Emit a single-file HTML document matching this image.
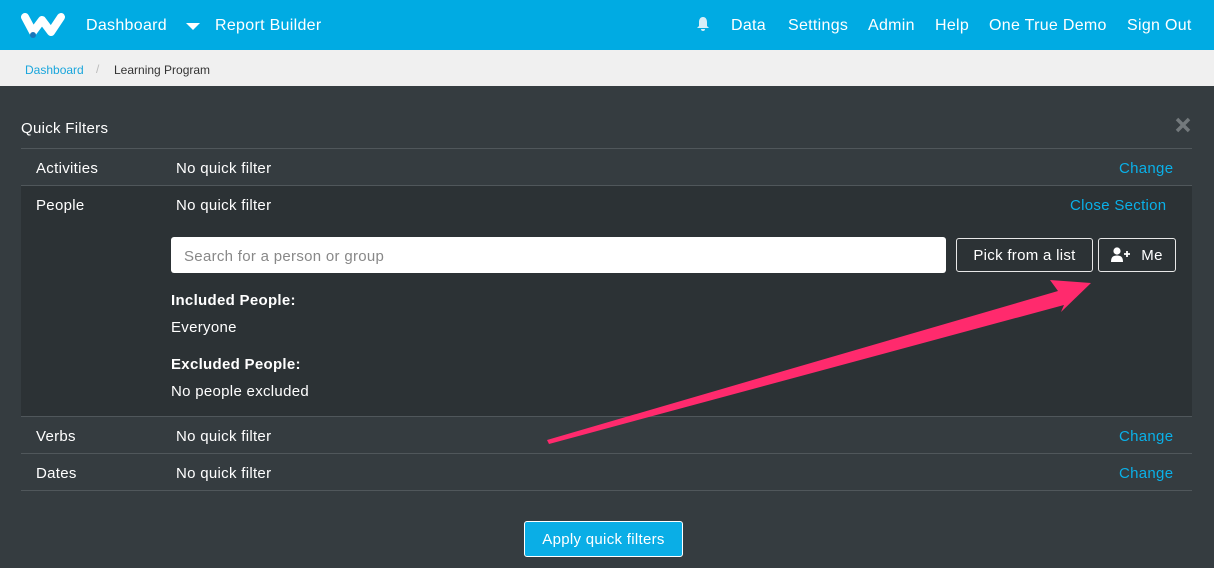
<!DOCTYPE html>
<html><head><style>
body{margin:0;width:1214px;height:568px;overflow:hidden;background:#353c40;font-family:"Liberation Sans",sans-serif;color:#fff;position:relative}
.nav{position:absolute;top:0;left:0;width:1214px;height:50px;background:#00abe3}
.nav span{position:absolute;top:17px;font-size:16px;color:#fff;letter-spacing:0.3px}
.bc{position:absolute;top:50px;left:0;width:1214px;height:36px;background:#f0f0f0;font-size:12px}
.t{position:absolute;font-size:15px;white-space:nowrap;letter-spacing:0.3px}
.hr{position:absolute;left:21px;width:1171px;height:1px;background:#50575b}
.b{color:#0ab0e8}
.btn{position:absolute;border:1px solid #e8e8e8;border-radius:3px;height:34px;box-sizing:border-box;font-size:15px;line-height:34px;text-align:center;letter-spacing:0.3px}
</style></head><body>
<div class="nav">
<svg style="position:absolute;left:20px;top:12px" width="47" height="26" viewBox="0 0 47 26"><path d="M5 5 L13 20 L22 8 L31 20 L41 5" stroke="#fff" stroke-width="8" fill="none" stroke-linecap="round" stroke-linejoin="round"/><circle cx="13" cy="23" r="3" fill="#1976b8"/></svg>
<span style="left:86px">Dashboard</span>
<svg style="position:absolute;left:186px;top:23px" width="14" height="8"><path d="M0 0H14L7 7z" fill="#fff"/></svg>
<span style="left:215px">Report Builder</span>
<svg style="position:absolute;left:696px;top:16px" width="14" height="16" viewBox="0 0 14 16"><path d="M7 1C4 1 3 4 3 6V10L1 12H13L11 10V6C11 4 10 1 7 1Z M5 13a2 2 0 0 0 4 0z" fill="#d8eef8"/></svg>
<span style="left:731px">Data</span><span style="left:788px">Settings</span><span style="left:868px">Admin</span><span style="left:935px">Help</span><span style="left:989px">One True Demo</span><span style="left:1127px">Sign Out</span>
</div>
<div class="bc"><span style="position:absolute;left:25px;top:13px;color:#1aa6dc">Dashboard</span><span style="position:absolute;left:96px;top:12px;color:#bbb">/</span><span style="position:absolute;left:114px;top:13px;color:#333">Learning Program</span></div>
<div style="position:absolute;left:21px;top:186px;width:1171px;height:230px;background:#2c3235"></div>
<div class="t" style="left:21px;top:120px">Quick Filters</div>
<svg style="position:absolute;left:1175px;top:117px" width="16" height="16"><path d="M2 2L14 14M14 2L2 14" stroke="#73797c" stroke-width="3.5"/></svg>
<div class="hr" style="top:148px"></div>
<div class="t" style="left:36px;top:160px">Activities</div><div class="t" style="left:176px;top:160px">No quick filter</div><div class="t b" style="left:1119px;top:160px">Change</div>
<div class="hr" style="top:185px"></div>
<div class="t" style="left:36px;top:197px">People</div><div class="t" style="left:176px;top:197px">No quick filter</div><div class="t b" style="left:1070px;top:197px">Close Section</div>
<div style="position:absolute;left:171px;top:237px;width:775px;height:36px;background:#fff;border-radius:3px"></div>
<div class="t" style="left:184px;top:248px;color:#888">Search for a person or group</div>
<div class="btn" style="left:956px;top:238px;width:137px">Pick from a list</div>
<div class="btn" style="left:1098px;top:238px;width:78px"><svg style="vertical-align:-2px;margin-right:10px" width="20" height="15" viewBox="0 0 20 15"><circle cx="6" cy="4" r="3.6" fill="#fff"/><path d="M0 15C0 10 2 8.5 6 8.5S12 10 12 15z" fill="#fff"/><path d="M16 4V10M13 7H19" stroke="#fff" stroke-width="1.8"/></svg>Me</div>
<div class="t" style="left:171px;top:292px;font-weight:bold">Included People:</div>
<div class="t" style="left:171px;top:319px">Everyone</div>
<div class="t" style="left:171px;top:356px;font-weight:bold">Excluded People:</div>
<div class="t" style="left:171px;top:383px">No people excluded</div>
<div class="hr" style="top:416px"></div>
<div class="t" style="left:36px;top:428px">Verbs</div><div class="t" style="left:176px;top:428px">No quick filter</div><div class="t b" style="left:1119px;top:428px">Change</div>
<div class="hr" style="top:453px"></div>
<div class="t" style="left:36px;top:465px">Dates</div><div class="t" style="left:176px;top:465px">No quick filter</div><div class="t b" style="left:1119px;top:465px">Change</div>
<div class="hr" style="top:490px"></div>
<div class="btn" style="left:524px;top:521px;width:159px;height:36px;line-height:36px;background:#0aaee6;border-color:#fff">Apply quick filters</div>
<svg style="position:absolute;left:0;top:0" width="1214" height="568"><path d="M547 440 L549 444 L1064 305 L1061 312 L1091 283 L1050 280 L1058 291 Z" fill="#ff2a6d"/></svg>
</body></html>
